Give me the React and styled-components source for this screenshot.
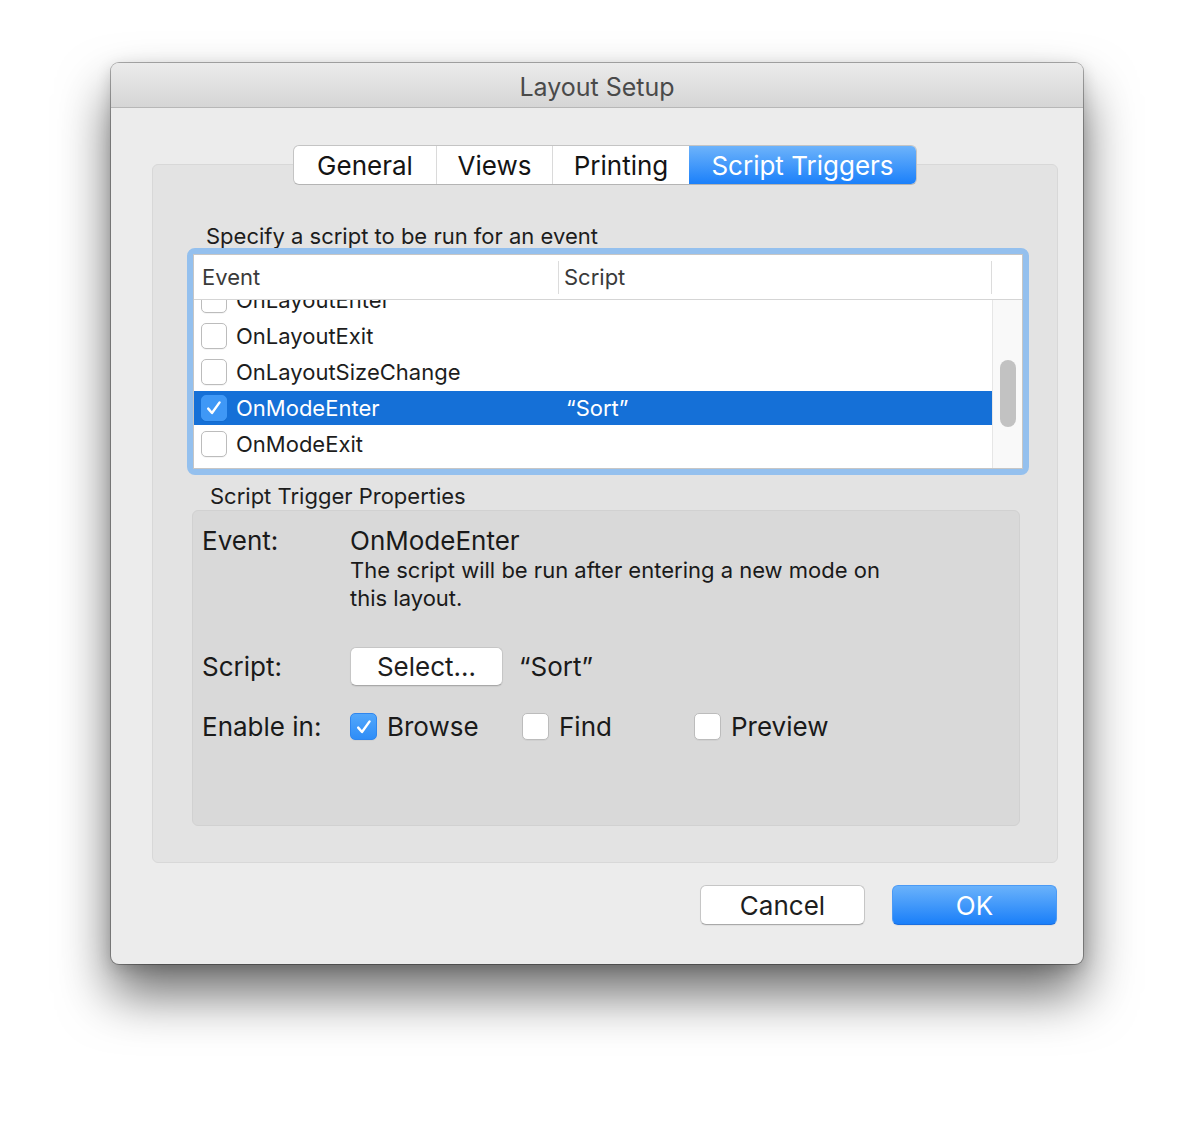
import React from 'react';
import styled, { createGlobalStyle, css } from 'styled-components';

const Global = createGlobalStyle`
  html, body { margin: 0; padding: 0; background: #ffffff; }
  body { font-family: Inter, "Noto Sans", "Liberation Sans", sans-serif; -webkit-font-smoothing: antialiased; color: #1d1d1d; }
  * { box-sizing: border-box; }
`;

const Page = styled.div`
  padding: 63px 0 0 111px;
  height: 1124px;
`;

const Window = styled.div`
  width: 972px;
  height: 901px;
  border-radius: 8px;
  background: #ececec;
  box-shadow: 0 0 0 1px rgba(0, 0, 0, 0.3), 0 30px 52px rgba(0, 0, 0, 0.58), 0 4px 16px rgba(0, 0, 0, 0.16);
  display: flex;
  flex-direction: column;
  overflow: hidden;
`;

const TitleBar = styled.div`
  height: 45px;
  flex: none;
  background: linear-gradient(#ebebeb, #d5d5d5);
  border-bottom: 1px solid #b7b7b7;
  display: flex;
  align-items: center;
  justify-content: center;
  font-size: 25px;
  color: #4a4a4a;
  padding-top: 3px;
`;

const Body = styled.div`
  flex: 1;
  display: flex;
  flex-direction: column;
  padding: 37px 25px 0 41px;
`;

const TabsRow = styled.div`
  display: flex;
  justify-content: center;
  position: relative;
  z-index: 1;
  margin-bottom: -21px;
`;

const Tabs = styled.div`
  display: flex;
  height: 40px;
  border-radius: 6px;
  border: 1px solid #c4c4c4;
  border-bottom-color: #b4b4b4;
  background: #ffffff;
  overflow: hidden;
`;

const Tab = styled.div`
  width: ${(p) => p.$w}px;
  display: flex;
  align-items: center;
  justify-content: center;
  font-size: 26px;
  color: #141414;
  border-left: 1px solid #dadada;
  &:first-child { border-left: none; }
  ${(p) =>
    p.$active &&
    css`
      background: linear-gradient(#6db3fb, #1b80fa);
      color: #ffffff;
      border-left: none;
    `}
`;

const Group = styled.div`
  height: 699px;
  background: #e3e3e3;
  border: 1px solid #d8d8d8;
  border-radius: 6px;
  padding-top: 59px;
  display: flex;
  flex-direction: column;
`;

const SectionLabel = styled.div`
  font-size: 22px;
  line-height: 24px;
  color: #1d1d1d;
  margin-left: ${(p) => p.$left}px;
  margin-top: ${(p) => p.$top || 0}px;
`;

const TableRing = styled.div`
  margin: 0 28px 0 34px;
  height: 227px;
  border: 6px solid #94c0ee;
  border-radius: 8px;
  background: #94c0ee;
`;

const Table = styled.div`
  height: 100%;
  border: 1px solid #c6c6c6;
  background: #ffffff;
  display: flex;
  flex-direction: column;
  overflow: hidden;
`;

const Header = styled.div`
  height: 45px;
  flex: none;
  display: flex;
  align-items: center;
  border-bottom: 1px solid #d5d5d5;
`;

const HeaderCell = styled.div`
  width: ${(p) => p.$w}px;
  padding-left: ${(p) => p.$pad}px;
  font-size: 22px;
  color: #3a3a3a;
`;

const HeaderDivider = styled.div`
  width: 1px;
  height: 33px;
  background: #dcdcdc;
`;

const TableBody = styled.div`
  flex: 1;
  display: flex;
  overflow: hidden;
`;

const RowList = styled.div`
  flex: 1;
  overflow: hidden;
`;

const RowInner = styled.div`
  margin-top: -17px;
`;

const Row = styled.div`
  height: 34px;
  margin-bottom: 2px;
  display: flex;
  align-items: center;
  font-size: 22px;
  color: ${(p) => (p.$selected ? '#ffffff' : '#1d1d1d')};
  background: ${(p) => (p.$selected ? '#1570d7' : 'transparent')};
`;

const EventCell = styled.div`
  width: 365px;
  display: flex;
  align-items: center;
  padding-left: 7px;
  gap: 9px;
`;

const ScriptCell = styled.div`
  padding-left: 7px;
`;

const ScrollTrack = styled.div`
  width: 30px;
  flex: none;
  background: #f9f9f9;
  border-left: 1px solid #e6e6e6;
  padding: 60px 0 0 7px;
`;

const Thumb = styled.div`
  width: 16px;
  height: 67px;
  border-radius: 8px;
  background: #c2c2c2;
`;

const Box = styled.span`
  width: ${(p) => p.$size}px;
  height: ${(p) => p.$size}px;
  flex: none;
  border-radius: 5px;
  display: inline-flex;
  align-items: center;
  justify-content: center;
  background: #ffffff;
  border: 1px solid #bcbcbc;
  box-shadow: 0 1px 0 rgba(0, 0, 0, 0.04);
  ${(p) =>
    p.$checked &&
    css`
      background: linear-gradient(#52a7fb, #2f8df7);
      border-color: #2f86ee;
    `}
  ${(p) =>
    p.$checked &&
    p.$onBlue &&
    css`
      background: #3f98f6;
      border-color: #3f98f6;
    `}
`;

const Check = () => (
  <svg width="20" height="20" viewBox="0 0 20 20">
    <path d="M4.2 10.6 L8 15 L15.6 4.4" fill="none" stroke="#ffffff" strokeWidth="2.4" strokeLinecap="round" strokeLinejoin="round" />
  </svg>
);

const Checkbox = ({ checked, size = 26, onBlue }) => (
  <Box $size={size} $checked={checked} $onBlue={onBlue}>
    {checked && <Check />}
  </Box>
);

const PropsBox = styled.div`
  margin: 2px 37px 0 39px;
  height: 316px;
  background: #d9d9d9;
  border: 1px solid #d1d1d1;
  border-radius: 6px;
  padding: 15px 0 0 9px;
  display: flex;
  flex-direction: column;
`;

const PropRow = styled.div`
  display: flex;
  align-items: ${(p) => (p.$top ? 'flex-start' : 'center')};
  margin-top: ${(p) => p.$mt || 0}px;
  height: ${(p) => (p.$h ? `${p.$h}px` : 'auto')};
`;

const PropLabel = styled.div`
  width: 148px;
  flex: none;
  font-size: 26px;
  line-height: 30px;
  color: #1a1a1a;
`;

const ValueCol = styled.div`
  display: flex;
  flex-direction: column;
`;

const EventName = styled.div`
  font-size: 26px;
  line-height: 30px;
  color: #1a1a1a;
`;

const Desc = styled.div`
  font-size: 22px;
  line-height: 28px;
  color: #1a1a1a;
  white-space: nowrap;
`;

const Button = styled.div`
  width: ${(p) => p.$w}px;
  height: ${(p) => p.$h}px;
  border-radius: 6px;
  display: flex;
  align-items: center;
  justify-content: center;
  font-size: 26px;
  background: #ffffff;
  color: #1e1e1e;
  border: 1px solid #c6c6c6;
  border-bottom-color: #a9a9a9;
  box-shadow: 0 1px 1px rgba(0, 0, 0, 0.06);
  ${(p) =>
    p.$primary &&
    css`
      background: linear-gradient(#6ab2fb, #1a7ff9);
      border-color: #4b9af5;
      border-bottom-color: #1b6fe0;
      color: #ffffff;
    `}
`;

const Quoted = styled.div`
  font-size: 26px;
  margin-left: 16px;
  color: #1a1a1a;
`;

const Option = styled.div`
  width: 172px;
  display: flex;
  align-items: center;
  gap: 10px;
  font-size: 26px;
  color: #1a1a1a;
`;

const Footer = styled.div`
  margin-top: 22px;
  display: flex;
  justify-content: flex-end;
  gap: 27px;
  padding-right: 1px;
`;

const rows = [
  { name: 'OnLayoutEnter' },
  { name: 'OnLayoutExit' },
  { name: 'OnLayoutSizeChange' },
  { name: 'OnModeEnter', checked: true, selected: true, script: '“Sort”' },
  { name: 'OnModeExit' },
];

export default function App() {
  return (
    <>
      <Global />
      <Page>
        <Window>
          <TitleBar>Layout Setup</TitleBar>
          <Body>
            <TabsRow>
              <Tabs>
                <Tab $w={142}>General</Tab>
                <Tab $w={116}>Views</Tab>
                <Tab $w={137}>Printing</Tab>
                <Tab $w={227} $active>Script Triggers</Tab>
              </Tabs>
            </TabsRow>
            <Group>
              <SectionLabel $left={53}>Specify a script to be run for an event</SectionLabel>
              <TableRing>
                <Table>
                  <Header>
                    <HeaderCell $w={364} $pad={8}>Event</HeaderCell>
                    <HeaderDivider />
                    <HeaderCell $w={432} $pad={5}>Script</HeaderCell>
                    <HeaderDivider />
                  </Header>
                  <TableBody>
                    <RowList>
                      <RowInner>
                        {rows.map((r) => (
                          <Row key={r.name} $selected={r.selected}>
                            <EventCell>
                              <Checkbox checked={r.checked} onBlue={r.selected} />
                              {r.name}
                            </EventCell>
                            <ScriptCell>{r.script}</ScriptCell>
                          </Row>
                        ))}
                      </RowInner>
                    </RowList>
                    <ScrollTrack>
                      <Thumb />
                    </ScrollTrack>
                  </TableBody>
                </Table>
              </TableRing>
              <SectionLabel $left={57} $top={9}>Script Trigger Properties</SectionLabel>
              <PropsBox>
                <PropRow $top>
                  <PropLabel>Event:</PropLabel>
                  <ValueCol>
                    <EventName>OnModeEnter</EventName>
                    <Desc>The script will be run after entering a new mode on</Desc>
                    <Desc>this layout.</Desc>
                  </ValueCol>
                </PropRow>
                <PropRow $mt={35} $h={39}>
                  <PropLabel>Script:</PropLabel>
                  <Button $w={153} $h={39}>Select…</Button>
                  <Quoted>“Sort”</Quoted>
                </PropRow>
                <PropRow $mt={20} $h={41}>
                  <PropLabel>Enable in:</PropLabel>
                  <Option>
                    <Checkbox checked size={27} />
                    Browse
                  </Option>
                  <Option>
                    <Checkbox size={27} />
                    Find
                  </Option>
                  <Option>
                    <Checkbox size={27} />
                    Preview
                  </Option>
                </PropRow>
              </PropsBox>
            </Group>
            <Footer>
              <Button $w={165} $h={40}>Cancel</Button>
              <Button $w={165} $h={40} $primary>OK</Button>
            </Footer>
          </Body>
        </Window>
      </Page>
    </>
  );
}
